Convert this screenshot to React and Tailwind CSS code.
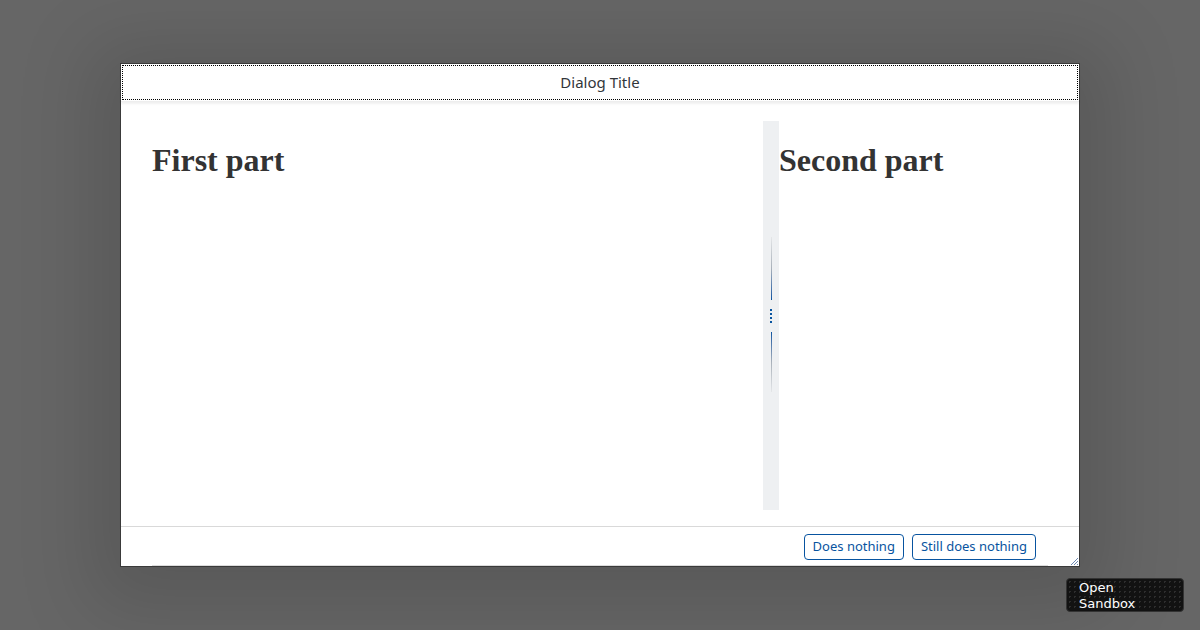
import React from 'react'

function Splitter() {
  return (
    <div className="w-4 shrink-0 bg-[#eef0f2] flex flex-col items-center justify-center">
      <div className="flex flex-col items-center mb-[2px]">
        <div className="w-px h-[63px] bg-gradient-to-b from-[#e4e6e8] via-[#a9b1ba] to-[#0854a0]" />
        <div className="flex flex-col gap-[2px] my-[9px]">
          <span className="w-[2px] h-[2px] bg-[#0854a0]" />
          <span className="w-[2px] h-[2px] bg-[#0854a0]" />
          <span className="w-[2px] h-[2px] bg-[#0854a0]" />
          <span className="w-[2px] h-[2px] bg-[#0854a0]" />
        </div>
        <div className="w-px h-[60px] bg-gradient-to-b from-[#0854a0] via-[#a9b1ba] to-[#e4e6e8]" />
      </div>
    </div>
  )
}

export default function App() {
  return (
    <div className="relative w-[1200px] h-[630px] bg-[#666666] overflow-hidden pt-[63px] pl-[120px] font-['Liberation_Sans',sans-serif]">
      {/* Dialog */}
      <div className="relative w-[960px] h-[504px] bg-white border border-[#3a3a3a] flex flex-col shadow-[0_12px_70px_30px_rgba(0,0,0,0.13)]">
        <header className="h-[38px] shrink-0 p-px shadow-[0_2px_2px_rgba(0,0,0,0.06)] border-b border-[#eeeeee]">
          <div className="h-full border border-dotted border-black flex items-center justify-center">
            <span className="text-[15px] text-[#32363a] font-['Noto_Sans',sans-serif]">Dialog Title</span>
          </div>
        </header>

        <div className="flex-1 flex pt-[19px] pb-4 pl-[31px] pr-[31px] min-h-0">
          <div className="flex-1">
            <h1 className="mt-[21px] text-[32px] leading-[37px] font-bold text-[#333333] font-['Liberation_Serif',serif]">First part</h1>
          </div>
          <Splitter />
          <div className="w-[269px] shrink-0">
            <h1 className="mt-[21px] text-[32px] leading-[37px] font-bold text-[#333333] font-['Liberation_Serif',serif]">Second part</h1>
          </div>
        </div>

        <footer className="h-10 shrink-0 border-t border-[#d9d9d9] flex items-center justify-end gap-2 pr-[43px]">
          <button className="h-[26px] px-[8px] rounded-[4px] border border-[#0854a0] text-[#0854a0] text-[13px] font-['Noto_Sans',sans-serif] bg-white">
            Does nothing
          </button>
          <button className="h-[26px] px-[8px] rounded-[4px] border border-[#0854a0] text-[#0854a0] text-[13px] font-['Noto_Sans',sans-serif] bg-white">
            Still does nothing
          </button>
        </footer>
        <div className="absolute bottom-0 left-[31px] right-[31px] h-px bg-[#dcdcdc]" />

        {/* resize grip */}
        <svg className="absolute right-0 bottom-0" width="9" height="9" viewBox="0 0 9 9">
          <path d="M8 1 L1 8 M8 4 L4 8 M8 7 L7 8" stroke="#6d89b3" strokeWidth="1" />
        </svg>
      </div>

      {/* Open Sandbox */}
      <button className="absolute left-[1066px] top-[578px] w-[118px] h-[34px] rounded-[4px] border border-[#333] bg-[#121212] bg-[radial-gradient(#2e2e2e_1px,transparent_1px)] bg-[length:5px_5px] text-left pl-[12px] pt-[1px] text-white text-[13px] leading-[16px] font-['DejaVu_Sans',sans-serif]">
        Open<br />Sandbox
      </button>
    </div>
  )
}
